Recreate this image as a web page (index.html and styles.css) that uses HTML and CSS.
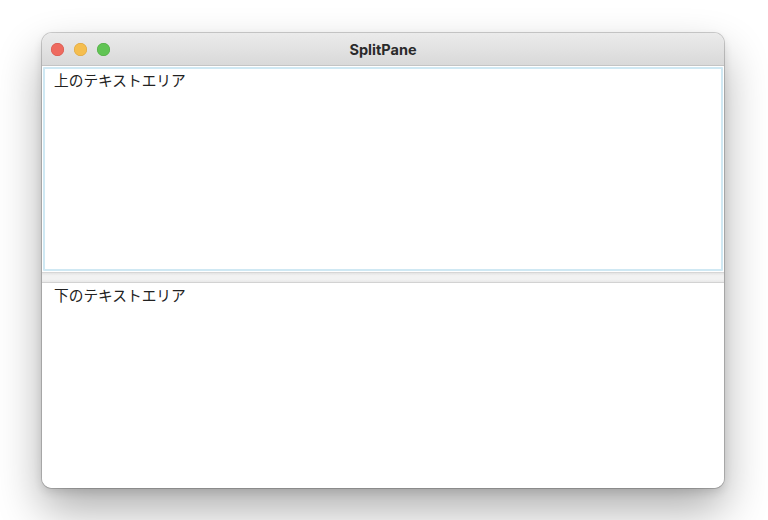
FILE: index.html
```html
<!DOCTYPE html>
<html lang="ja">
<head>
<meta charset="utf-8">
<title>SplitPane</title>
<link rel="stylesheet" href="styles.css">
</head>
<body>
<div class="window">
  <div class="titlebar">
    <div class="lights">
      <span class="light red"></span>
      <span class="light yellow"></span>
      <span class="light green"></span>
    </div>
    <div class="title">SplitPane</div>
  </div>
  <div class="content">
    <div class="pane top">
      <div class="focus">
        <div class="text">上のテキストエリア</div>
      </div>
    </div>
    <div class="divider"></div>
    <div class="pane bottom">
      <div class="text">下のテキストエリア</div>
    </div>
  </div>
</div>
</body>
</html>
```
FILE: styles.css
```css
html, body {
  margin: 0;
  padding: 0;
  background: #ffffff;
  width: 768px;
  height: 520px;
  overflow: hidden;
}
body {
  padding: 33px 0 0 42px;
  box-sizing: border-box;
  font-family: "Noto Sans CJK JP", "Noto Sans", sans-serif;
}
.window {
  width: 682px;
  height: 455px;
  border-radius: 10px;
  background: #ffffff;
  box-shadow: 0 0 0 1px rgba(0,0,0,0.18), 0 22px 45px rgba(0,0,0,0.32), 0 4px 10px rgba(0,0,0,0.12);
  display: flex;
  flex-direction: column;
  overflow: hidden;
}
.titlebar {
  height: 32px;
  flex: none;
  background: linear-gradient(#ebebeb, #d9d9d9);
  border-bottom: 1px solid #c4c4c4;
  display: flex;
  align-items: center;
  position: relative;
}
.lights {
  display: flex;
  gap: 10px;
  padding-left: 9px;
}
.light {
  width: 13px;
  height: 13px;
  border-radius: 50%;
  display: block;
}
.red { background: #ee6a5f; box-shadow: inset 0 0 0 0.5px #d25248; }
.yellow { background: #f5be4f; box-shadow: inset 0 0 0 0.5px #d9a13a; }
.green { background: #61c454; box-shadow: inset 0 0 0 0.5px #4ea83f; }
.title {
  position: absolute;
  left: 0;
  right: 0;
  top: 0;
  bottom: 0;
  display: flex;
  align-items: center;
  justify-content: center;
  font-family: "Inter", "Liberation Sans", sans-serif;
  font-weight: 700;
  font-size: 14.5px;
  color: #2a2a2a;
}
.content {
  flex: 1;
  display: flex;
  flex-direction: column;
  background: #ffffff;
}
.pane.top {
  height: 206px;
  flex: none;
  padding: 1px;
  box-sizing: border-box;
}
.focus {
  height: 100%;
  box-sizing: border-box;
  border: 2px solid #cfe8f3;
  border-radius: 1px;
  padding: 1px 0 0 9px;
}
.divider {
  height: 9px;
  flex: none;
  background: linear-gradient(#e4e4e4, #f2f2f2 30%, #f2f2f2 70%, #e8e8e8);
  border-top: 1px solid #d6d6d6;
  border-bottom: 1px solid #d2d2d2;
}
.pane.bottom {
  flex: 1;
  padding: 2px 0 0 12px;
}
.text {
  font-size: 14.7px;
  line-height: 20px;
  font-weight: 400;
  color: #222222;
}
```
